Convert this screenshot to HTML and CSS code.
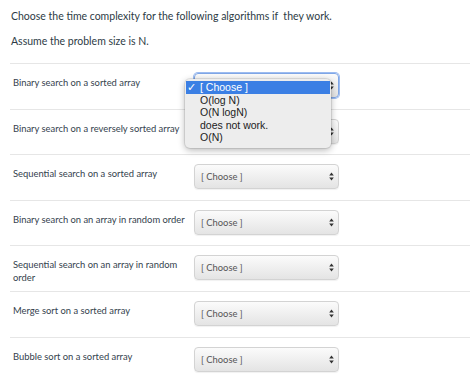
FILE: index.html
```html
<!DOCTYPE html>
<html lang="en">

<head>
    <meta charset="UTF-8">
    <title>Quiz</title>
    <link rel="stylesheet" href="styles.css">
</head>

<body>
    <div class="page">
        <div class="intro">
            <p>Choose the time complexity for the following algorithms if&nbsp; they work.</p>
            <p class="second">Assume the problem size is N.</p>
        </div>

        <div class="row">
            <div class="label">Binary search on a sorted array</div>
            <div class="select focused">
                <span>[ Choose ]</span>
                <svg class="arrows" width="5" height="9" viewBox="0 0 5 9"><path d="M2.5 0.5L4.8 3.6H0.2Z M2.5 8.5L4.8 5.4H0.2Z" /></svg>
            </div>
        </div>
        <div class="row">
            <div class="label">Binary search on a reversely sorted array</div>
            <div class="select">
                <span>[ Choose ]</span>
                <svg class="arrows" width="5" height="9" viewBox="0 0 5 9"><path d="M2.5 0.5L4.8 3.6H0.2Z M2.5 8.5L4.8 5.4H0.2Z" /></svg>
            </div>
        </div>
        <div class="row">
            <div class="label">Sequential search on a sorted array</div>
            <div class="select">
                <span>[ Choose ]</span>
                <svg class="arrows" width="5" height="9" viewBox="0 0 5 9"><path d="M2.5 0.5L4.8 3.6H0.2Z M2.5 8.5L4.8 5.4H0.2Z" /></svg>
            </div>
        </div>
        <div class="row">
            <div class="label">Binary search on an array in random order</div>
            <div class="select">
                <span>[ Choose ]</span>
                <svg class="arrows" width="5" height="9" viewBox="0 0 5 9"><path d="M2.5 0.5L4.8 3.6H0.2Z M2.5 8.5L4.8 5.4H0.2Z" /></svg>
            </div>
        </div>
        <div class="row">
            <div class="label">Sequential search on an array in random order</div>
            <div class="select">
                <span>[ Choose ]</span>
                <svg class="arrows" width="5" height="9" viewBox="0 0 5 9"><path d="M2.5 0.5L4.8 3.6H0.2Z M2.5 8.5L4.8 5.4H0.2Z" /></svg>
            </div>
        </div>
        <div class="row">
            <div class="label">Merge sort on a sorted array</div>
            <div class="select">
                <span>[ Choose ]</span>
                <svg class="arrows" width="5" height="9" viewBox="0 0 5 9"><path d="M2.5 0.5L4.8 3.6H0.2Z M2.5 8.5L4.8 5.4H0.2Z" /></svg>
            </div>
        </div>
        <div class="row">
            <div class="label">Bubble sort on a sorted array</div>
            <div class="select">
                <span>[ Choose ]</span>
                <svg class="arrows" width="5" height="9" viewBox="0 0 5 9"><path d="M2.5 0.5L4.8 3.6H0.2Z M2.5 8.5L4.8 5.4H0.2Z" /></svg>
            </div>
        </div>

        <!-- open dropdown of the first select -->
        <ul class="menu">
            <li class="active"><span class="check">&#10003;</span>[ Choose ]</li>
            <li>O(log N)</li>
            <li>O(N logN)</li>
            <li>does not work.</li>
            <li>O(N)</li>
        </ul>
    </div>
</body>

</html>
```

FILE: styles.css
```css
body {
    margin: 0;
    background-color: #fff;
    font-family: Lato, "Open Sans", sans-serif;
    color: #2d3b45;
}

.page {
    position: relative;
    padding: 0 4px 0 10px;
}

.intro {
    padding-top: 9px;
    padding-bottom: 14px;
    font-size: 10.5px;
}

.intro p {
    margin: 0;
    line-height: 15px;
    padding-left: 1px;
}

.intro .second {
    margin-top: 10px;
}

.row {
    display: grid;
    grid-template-columns: 181px 145px;
    align-items: start;
    border-top: 1px solid #e6e6e6;
    padding: 9px 0 10.6px 3px;
    font-size: 9.4px;
}

.label {
    line-height: 13px;
    padding-top: 3px;
    margin-bottom: -5px;
    color: #34424d;
}

.select {
    position: relative;
    height: 25px;
    box-sizing: border-box;
    border: 1px solid #d3d3d3;
    border-radius: 4px;
    background: linear-gradient(#fbfbfb, #e4e4e4);
    box-shadow: 0 1px 1px rgba(0, 0, 0, 0.06);
    display: flex;
    align-items: center;
    padding-left: 6px;
    color: #555;
}

.select.focused {
    border-color: #7fa6e6;
    box-shadow: 0 0 0 1px #9dbcf0;
}

.arrows {
    position: absolute;
    right: 4px;
    top: 7px;
    fill: #333;
}

.menu {
    position: absolute;
    left: 185px;
    top: 79px;
    width: 146px;
    margin: 0;
    padding: 2px 1px 4px 1px;
    box-sizing: border-box;
    list-style: none;
    background-color: #ededed;
    border-radius: 5px;
    box-shadow: 0 2px 7px rgba(0, 0, 0, 0.3), 0 0 0 1px rgba(0, 0, 0, 0.08);
    font-family: "Liberation Sans", Arial, sans-serif;
    font-size: 10.5px;
    color: #222;
}

.menu li {
    position: relative;
    height: 12.5px;
    line-height: 12.5px;
    padding-left: 14px;
}

.menu li.active {
    background-color: #3b7fe4;
    color: #fff;
}

.menu .check {
    position: absolute;
    left: 1px;
    top: 0;
}
```
